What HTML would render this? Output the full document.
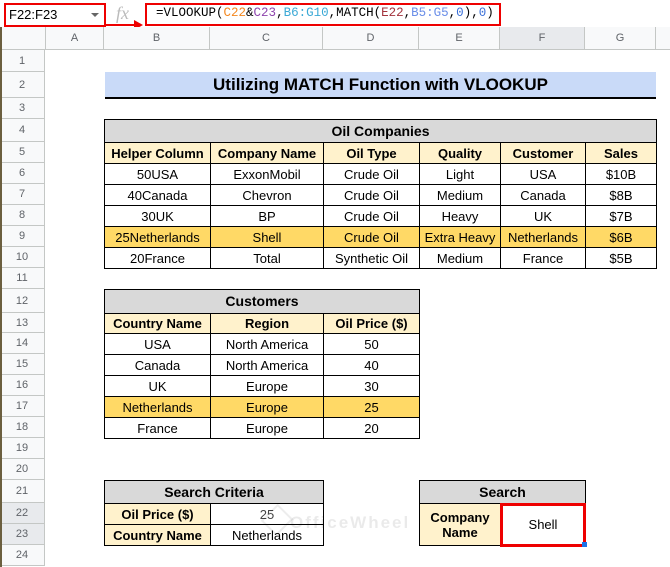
<!DOCTYPE html>
<html><head><meta charset="utf-8"><style>
*{margin:0;padding:0}
body{width:670px;height:565px;overflow:hidden;background:#fff;position:relative;font-family:"Liberation Sans",Arial,sans-serif;font-size:13px;color:#000}
.a{position:absolute}
.c{position:absolute;box-sizing:border-box;border:1px solid #000;display:flex;align-items:center;justify-content:center;text-align:center;font-size:13px;line-height:15px}
.g{background:#d9d9d9;font-weight:bold;font-size:14px}
.y{background:#fff2cc;font-weight:bold}
.h{background:#ffd966}
.rh{position:absolute;left:0;width:45px;box-sizing:border-box;background:#f8f9fa;border-bottom:1px solid #c4c7c5;border-right:1px solid #c4c7c5;color:#5f6368;font-size:11px;display:flex;align-items:center;justify-content:center}
.ch{position:absolute;top:27px;height:23px;box-sizing:border-box;background:#f8f9fa;border-right:1px solid #c4c7c5;border-bottom:1px solid #c4c7c5;color:#5f6368;font-size:11px;display:flex;align-items:center;justify-content:center}
.mono{font-family:"Liberation Mono",monospace;font-size:12.5px}
</style></head><body>
<div class="a" style="left:0;top:0;width:670px;height:27px;background:#fff;border-bottom:1px solid #c4c7c5"></div>
<div class="a" style="left:4px;top:3px;width:98px;height:20px;border:2px solid #e00;"></div>
<div class="a" style="left:9px;top:7px;font-size:13px">F22:F23</div>
<div class="a" style="left:91px;top:13px;width:0;height:0;border-left:4px solid transparent;border-right:4px solid transparent;border-top:4px solid #666"></div>
<div class="a" style="left:116px;top:3px;font-family:'Liberation Serif',serif;font-style:italic;font-size:18px;color:#bbb">fx</div>
<div class="a" style="left:106px;top:24px;width:30px;height:2px;background:#e00"></div>
<div class="a" style="left:134px;top:20px;width:0;height:0;border-top:5px solid transparent;border-bottom:5px solid transparent;border-left:9px solid #e00"></div>
<div class="a" style="left:145px;top:3px;width:352px;height:19px;border:2px solid #e00"></div>
<div class="a mono" style="left:156px;top:6px;white-space:pre">=VLOOKUP(<span style="color:#f4871e">C22</span>&amp;<span style="color:#8e44ad">C23</span>,<span style="color:#3ba9d6">B6:G10</span>,MATCH(<span style="color:#a3333d">E22</span>,<span style="color:#6a8ee8">B5:G5</span>,<span style="color:#3a6fd8">0</span>),<span style="color:#3a6fd8">0</span>)</div>
<div class="ch" style="left:0;width:46px"></div>
<div class="ch" style="left:46px;width:58px">A</div>
<div class="ch" style="left:104px;width:106px">B</div>
<div class="ch" style="left:210px;width:113px">C</div>
<div class="ch" style="left:323px;width:96px">D</div>
<div class="ch" style="left:419px;width:81px">E</div>
<div class="ch" style="left:500px;width:85px;background:#e8eaed">F</div>
<div class="ch" style="left:585px;width:71px">G</div>
<div class="ch" style="left:656px;width:20px"></div>
<div class="rh" style="top:50px;height:22px">1</div>
<div class="rh" style="top:72px;height:26px">2</div>
<div class="rh" style="top:98px;height:21px">3</div>
<div class="rh" style="top:119px;height:23px">4</div>
<div class="rh" style="top:142px;height:21px">5</div>
<div class="rh" style="top:163px;height:21px">6</div>
<div class="rh" style="top:184px;height:21px">7</div>
<div class="rh" style="top:205px;height:21px">8</div>
<div class="rh" style="top:226px;height:21px">9</div>
<div class="rh" style="top:247px;height:21px">10</div>
<div class="rh" style="top:268px;height:21px">11</div>
<div class="rh" style="top:289px;height:24px">12</div>
<div class="rh" style="top:313px;height:20px">13</div>
<div class="rh" style="top:333px;height:21px">14</div>
<div class="rh" style="top:354px;height:21px">15</div>
<div class="rh" style="top:375px;height:21px">16</div>
<div class="rh" style="top:396px;height:21px">17</div>
<div class="rh" style="top:417px;height:21px">18</div>
<div class="rh" style="top:438px;height:21px">19</div>
<div class="rh" style="top:459px;height:21px">20</div>
<div class="rh" style="top:480px;height:23px">21</div>
<div class="rh" style="top:503px;height:21px;background:#e8eaed">22</div>
<div class="rh" style="top:524px;height:21px;background:#e8eaed">23</div>
<div class="rh" style="top:545px;height:21px">24</div>
<div class="a" style="left:0;top:27px;width:2px;height:540px;background:#6b5f3f"></div>
<div class="a" style="left:105px;top:72px;width:551px;height:26px;background:#c9daf8;display:flex;align-items:center;justify-content:center;font-weight:bold;font-size:17px">Utilizing MATCH Function with VLOOKUP</div>
<div class="a" style="left:105px;top:97px;width:551px;height:2px;background:#000"></div>
<div class="c g" style="left:104px;top:119px;width:553px;height:24px">Oil Companies</div>
<div class="c y" style="left:104px;top:142px;width:107px;height:22px">Helper Column</div>
<div class="c y" style="left:210px;top:142px;width:114px;height:22px">Company Name</div>
<div class="c y" style="left:323px;top:142px;width:97px;height:22px">Oil Type</div>
<div class="c y" style="left:419px;top:142px;width:82px;height:22px">Quality</div>
<div class="c y" style="left:500px;top:142px;width:86px;height:22px">Customer</div>
<div class="c y" style="left:585px;top:142px;width:72px;height:22px">Sales</div>
<div class="c" style="left:104px;top:163px;width:107px;height:22px">50USA</div>
<div class="c" style="left:210px;top:163px;width:114px;height:22px">ExxonMobil</div>
<div class="c" style="left:323px;top:163px;width:97px;height:22px">Crude Oil</div>
<div class="c" style="left:419px;top:163px;width:82px;height:22px">Light</div>
<div class="c" style="left:500px;top:163px;width:86px;height:22px">USA</div>
<div class="c" style="left:585px;top:163px;width:72px;height:22px">$10B</div>
<div class="c" style="left:104px;top:184px;width:107px;height:22px">40Canada</div>
<div class="c" style="left:210px;top:184px;width:114px;height:22px">Chevron</div>
<div class="c" style="left:323px;top:184px;width:97px;height:22px">Crude Oil</div>
<div class="c" style="left:419px;top:184px;width:82px;height:22px">Medium</div>
<div class="c" style="left:500px;top:184px;width:86px;height:22px">Canada</div>
<div class="c" style="left:585px;top:184px;width:72px;height:22px">$8B</div>
<div class="c" style="left:104px;top:205px;width:107px;height:22px">30UK</div>
<div class="c" style="left:210px;top:205px;width:114px;height:22px">BP</div>
<div class="c" style="left:323px;top:205px;width:97px;height:22px">Crude Oil</div>
<div class="c" style="left:419px;top:205px;width:82px;height:22px">Heavy</div>
<div class="c" style="left:500px;top:205px;width:86px;height:22px">UK</div>
<div class="c" style="left:585px;top:205px;width:72px;height:22px">$7B</div>
<div class="c h" style="left:104px;top:226px;width:107px;height:22px">25Netherlands</div>
<div class="c h" style="left:210px;top:226px;width:114px;height:22px">Shell</div>
<div class="c h" style="left:323px;top:226px;width:97px;height:22px">Crude Oil</div>
<div class="c h" style="left:419px;top:226px;width:82px;height:22px">Extra Heavy</div>
<div class="c h" style="left:500px;top:226px;width:86px;height:22px">Netherlands</div>
<div class="c h" style="left:585px;top:226px;width:72px;height:22px">$6B</div>
<div class="c" style="left:104px;top:247px;width:107px;height:22px">20France</div>
<div class="c" style="left:210px;top:247px;width:114px;height:22px">Total</div>
<div class="c" style="left:323px;top:247px;width:97px;height:22px">Synthetic Oil</div>
<div class="c" style="left:419px;top:247px;width:82px;height:22px">Medium</div>
<div class="c" style="left:500px;top:247px;width:86px;height:22px">France</div>
<div class="c" style="left:585px;top:247px;width:72px;height:22px">$5B</div>
<div class="c g" style="left:104px;top:289px;width:316px;height:25px">Customers</div>
<div class="c y" style="left:104px;top:313px;width:107px;height:21px">Country Name</div>
<div class="c y" style="left:210px;top:313px;width:114px;height:21px">Region</div>
<div class="c y" style="left:323px;top:313px;width:97px;height:21px">Oil Price ($)</div>
<div class="c" style="left:104px;top:333px;width:107px;height:22px">USA</div>
<div class="c" style="left:210px;top:333px;width:114px;height:22px">North America</div>
<div class="c" style="left:323px;top:333px;width:97px;height:22px">50</div>
<div class="c" style="left:104px;top:354px;width:107px;height:22px">Canada</div>
<div class="c" style="left:210px;top:354px;width:114px;height:22px">North America</div>
<div class="c" style="left:323px;top:354px;width:97px;height:22px">40</div>
<div class="c" style="left:104px;top:375px;width:107px;height:22px">UK</div>
<div class="c" style="left:210px;top:375px;width:114px;height:22px">Europe</div>
<div class="c" style="left:323px;top:375px;width:97px;height:22px">30</div>
<div class="c h" style="left:104px;top:396px;width:107px;height:22px">Netherlands</div>
<div class="c h" style="left:210px;top:396px;width:114px;height:22px">Europe</div>
<div class="c h" style="left:323px;top:396px;width:97px;height:22px">25</div>
<div class="c" style="left:104px;top:417px;width:107px;height:22px">France</div>
<div class="c" style="left:210px;top:417px;width:114px;height:22px">Europe</div>
<div class="c" style="left:323px;top:417px;width:97px;height:22px">20</div>
<div class="c g" style="left:104px;top:480px;width:220px;height:24px">Search Criteria</div>
<div class="c y" style="left:104px;top:503px;width:107px;height:22px">Oil Price ($)</div>
<div class="c" style="left:210px;top:503px;width:114px;height:22px;color:#444">25</div>
<div class="c y" style="left:104px;top:524px;width:107px;height:22px">Country Name</div>
<div class="c" style="left:210px;top:524px;width:114px;height:22px">Netherlands</div>
<div class="c g" style="left:419px;top:480px;width:167px;height:24px">Search</div>
<div class="c y" style="left:419px;top:503px;width:82px;height:43px">Company<br>Name</div>
<div class="c" style="left:500px;top:503px;width:86px;height:43px">Shell</div>
<div class="a" style="left:500px;top:503px;width:80px;height:38px;border:3px solid #e00"></div>
<div class="a" style="left:582px;top:542px;width:5px;height:5px;background:#1a73e8"></div>
<div class="a" style="left:290px;top:513px;font-size:17px;letter-spacing:2px;color:#000;opacity:0.08;font-weight:bold">OfficeWheel</div>
<div class="a" style="left:266px;top:508px;width:18px;height:20px;border:2px solid #000;opacity:0.07;transform:rotate(45deg)"></div>
</body></html>
